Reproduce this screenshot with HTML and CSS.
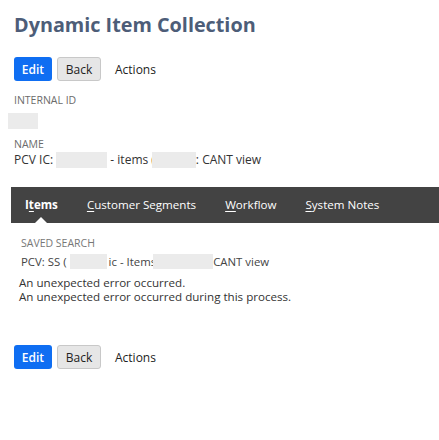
FILE: index.html
```html
<!DOCTYPE html>
<html>
<head>
<meta charset="utf-8">
<link rel="stylesheet" href="styles.css">
</head>
<body>
<div class="page">
  <h1 class="title">Dynamic Item Collection</h1>
  <div class="btnbar top">
    <span class="btn primary">Edit</span>
    <span class="btn secondary">Back</span>
    <span class="btn link">Actions</span>
  </div>
  <div class="field first">
    <div class="label">INTERNAL ID</div>
    <div class="redact id"></div>
  </div>
  <div class="field second">
    <div class="label">NAME</div>
    <div class="value">PCV IC: <span class="redact r1"></span> - items (<span class="redact r2"></span>: CANT view</div>
  </div>
</div>
<div class="tabs">
  <span class="tab active">I<u>t</u>ems</span>
  <span class="tab"><u>C</u>ustomer Segments</span>
  <span class="tab"><u>W</u>orkflow</span>
  <span class="tab"><u>S</u>ystem Notes</span>
</div>
<div class="tabbody">
  <div class="label light">SAVED SEARCH</div>
  <div class="value ss">PCV: SS (<span class="redact r3"></span>ic - Items<span class="redact r4"></span>CANT view</div>
  <div class="errors">
    <div>An unexpected error occurred.</div>
    <div>An unexpected error occurred during this process.</div>
  </div>
</div>
<div class="page">
  <div class="btnbar bottom">
    <span class="btn primary">Edit</span>
    <span class="btn secondary">Back</span>
    <span class="btn link">Actions</span>
  </div>
</div>
</body>
</html>
```
FILE: styles.css
```css
html, body {
  margin: 0;
  padding: 0;
  background: #fff;
  font-family: "Open Sans", "DejaVu Sans", sans-serif;
  color: #333;
}
.page {
  padding: 0 14px;
}
.title {
  margin: 0;
  padding-top: 11px;
  font-size: 19.8px;
  line-height: 28px;
  font-weight: 700;
  color: #4d5d78;
}
.btnbar {
  display: flex;
  align-items: center;
  gap: 5px;
}
.btnbar.top {
  margin-top: 18px;
}
.btnbar.bottom {
  margin-top: 41px;
}
.btn {
  box-sizing: border-box;
  height: 24px;
  display: inline-flex;
  align-items: center;
  justify-content: center;
  font-size: 12px;
  border-radius: 3px;
}
.btn.primary {
  width: 38px;
  background: #0f6ef2;
  color: #fff;
  font-weight: 600;
}
.btn.secondary {
  width: 44px;
  background: #e6e6e6;
  border: 1px solid #c8c8c8;
  color: #222;
}
.btn.link {
  padding: 0 9px;
  color: #222;
}
.field.first {
  margin-top: 12px;
}
.field.second {
  margin-top: 8px;
}
.label {
  font-size: 10.5px;
  line-height: 14px;
  color: #6b6b6b;
}
.redact {
  display: inline-block;
  background: #ebebeb;
}
.redact.id {
  display: block;
  width: 30px;
  height: 16px;
  margin-left: -6px;
  margin-top: 6px;
}
.value {
  font-size: 12px;
  line-height: 16px;
  color: #333;
  margin-top: 1px;
  white-space: nowrap;
}
.redact.r1 {
  width: 51px;
  height: 16px;
  vertical-align: -4px;
}
.redact.r2 {
  width: 44px;
  height: 16px;
  vertical-align: -4px;
  margin-left: -3px;
}
.tabs {
  margin: 19px 0 0 11px;
  height: 36px;
  background: #434343;
  display: flex;
  align-items: center;
  padding-left: 14px;
  gap: 29px;
}
.tab {
  position: relative;
  font-size: 11.6px;
  color: #fff;
  line-height: 16px;
  white-space: nowrap;
}
.tab u {
  text-underline-offset: 2px;
}
.tab.active {
  font-weight: 700;
}
.tab.active::after {
  content: "";
  position: absolute;
  left: 50%;
  bottom: -10px;
  margin-left: -6px;
  border-left: 6px solid transparent;
  border-right: 6px solid transparent;
  border-bottom: 6px solid #fff;
}
.tabbody {
  padding: 13px 0 0 21px;
}
.label.light {
  color: #777;
}
.value.ss {
  margin-top: 4px;
  font-size: 11.4px;
  color: #444;
}
.redact.r3 {
  width: 37px;
  height: 15px;
  vertical-align: -3px;
  margin-left: 3px;
  margin-right: 2px;
}
.redact.r4 {
  width: 60px;
  height: 15px;
  vertical-align: -3px;
  margin-left: -3px;
}
.errors {
  margin-left: -2px;
  margin-top: 6px;
  font-size: 11.6px;
  line-height: 14px;
  color: #333;
}
```
